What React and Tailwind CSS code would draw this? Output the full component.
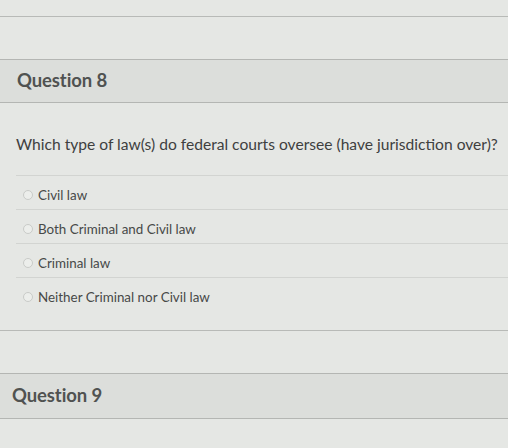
const answers = [
  'Civil law',
  'Both Criminal and Civil law',
  'Criminal law',
  'Neither Criminal nor Civil law',
];

function Radio() {
  return (
    <span className="w-[10px] h-[10px] rounded-full border border-[#c9cbc8] bg-[#eceeeb] shrink-0" />
  );
}

function QuestionHeader({ title, className = '' }) {
  return (
    <div className={`bg-[#dcdedb] border-y border-[#b4b6b3] flex items-center ${className}`}>
      <h2 className="text-[18.5px] font-bold text-[#505251] tracking-[-0.1px]">{title}</h2>
    </div>
  );
}

export default function App() {
  return (
    <div
      className="w-[508px] h-[448px] overflow-hidden bg-[#e5e7e4] text-[#444645]"
      style={{ fontFamily: 'Lato, "Open Sans", sans-serif' }}
    >
      <div className="h-[17px] border-b border-[#b8bab7]" />
      <div className="h-[42px]" />

      <QuestionHeader title="Question 8" className="h-[44px] pl-[17px]" />

      <div className="pt-[31px] pl-[16px]">
        <p className="text-[15.6px] leading-[20px] text-[#3e403f]">
          Which type of law(s) do federal courts oversee (have jurisdiction over)?
        </p>
        <ul className="mt-[21px]">
          {answers.map((a) => (
            <li
              key={a}
              className="h-[34px] border-t border-[#d2d4d1] flex items-center gap-[5px] pl-[7px] pt-[5px] text-[13.4px] text-[#474948]"
            >
              <Radio />
              <span>{a}</span>
            </li>
          ))}
        </ul>
      </div>

      <div className="h-[20px] border-b border-[#b8bab7]" />
      <div className="h-[42px]" />

      <QuestionHeader title="Question 9" className="h-[46px] pl-[12px]" />
    </div>
  );
}
